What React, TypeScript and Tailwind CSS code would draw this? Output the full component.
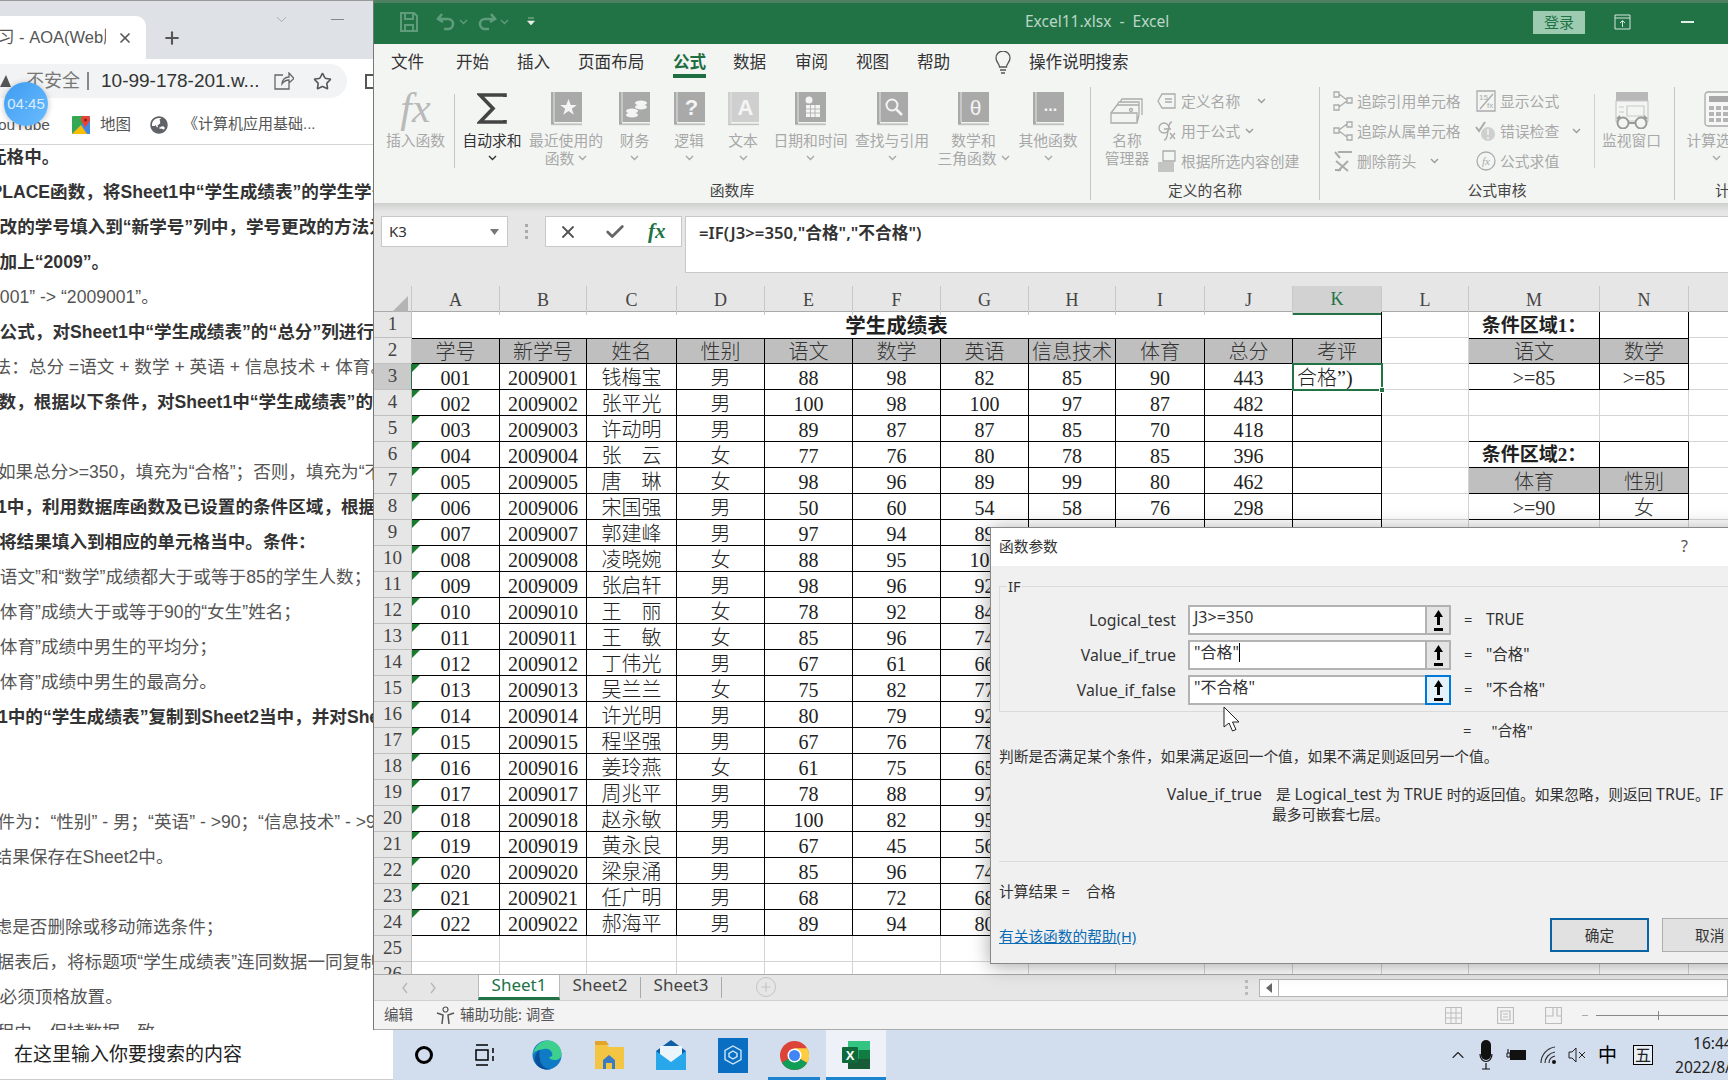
import React from "react";
import { Plus, Star, X, Check, ChevronUp, ChevronDown } from "lucide-react";
import { FaGlobeAsia } from "react-icons/fa";

const lines: { t: string; b?: boolean; m: string }[] = [
  { t: "元格中。", b: true, m: "ml-[-11px]" },
  { t: "REPLACE函数，将Sheet1中“学生成绩表”的学生学号", b: true, m: "ml-[-34px]" },
  { t: "更改的学号填入到“新学号”列中，学号更改的方法为", b: true, m: "ml-[-18px]" },
  { t: "前加上“2009”。", b: true, m: "ml-[-18px]" },
  { t: "“001” -> “2009001”。", m: "ml-[-6px]" },
  { t: "用公式，对Sheet1中“学生成绩表”的“总分”列进行", b: true, m: "ml-[-18px]" },
  { t: "方法：总分 =语文 + 数学 + 英语 + 信息技术 + 体育。", m: "ml-[-24px]" },
  { t: "函数，根据以下条件，对Sheet1中“学生成绩表”的“", b: true, m: "ml-[-19px]" },
  { t: "", m: "" },
  { t: "如果总分>=350，填充为“合格”；否则，填充为“不合格”。", m: "ml-[-2px]" },
  { t: "Sheet1中，利用数据库函数及已设置的条件区域，根据", b: true, m: "ml-[-51px]" },
  { t: "将结果填入到相应的单元格当中。条件：", b: true, m: "ml-[-1px]" },
  { t: "“语文”和“数学”成绩都大于或等于85的学生人数；", m: "ml-[-6px]" },
  { t: "“体育”成绩大于或等于90的“女生”姓名；", m: "ml-[-6px]" },
  { t: "“体育”成绩中男生的平均分；", m: "ml-[-6px]" },
  { t: "“体育”成绩中男生的最高分。", m: "ml-[-6px]" },
  { t: "Sheet1中的“学生成绩表”复制到Sheet2当中，并对Sheet", b: true, m: "ml-[-50px]" },
  { t: "", m: "" },
  { t: "", m: "" },
  { t: "条件为：“性别” - 男；“英语” - >90；“信息技术” - >90", m: "ml-[-20px]" },
  { t: "将结果保存在Sheet2中。", m: "ml-[-23px]" },
  { t: "", m: "" },
  { t: "考虑是否删除或移动筛选条件；", m: "ml-[-23px]" },
  { t: "数据表后，将标题项“学生成绩表”连同数据一同复制", m: "ml-[-21px]" },
  { t: "时必须顶格放置。", m: "ml-[-18px]" },
  { t: "过程中，保持数据一致。", m: "ml-[-21px]" },
];

const names = ["钱梅宝","张平光","许动明","张　云","唐　琳","宋国强","郭建峰","凌晓婉","张启轩","王　丽","王　敏","丁伟光","吴兰兰","许光明","程坚强","姜玲燕","周兆平","赵永敏","黄永良","梁泉涌","任广明","郝海平"];
const sex = "男男男女女男男女男女女男女男男女男男男男男男";
const E = [88,100,89,77,98,50,97,88,98,78,85,67,75,80,67,61,78,100,67,85,68,89];
const F = [98,98,87,76,96,60,94,95,96,92,96,61,82,79,76,75,88,82,45,96,72,94];
const G = [82,100,87,80,89,54,89,100,92,84,74,66,77,92,78,65,97,95,56,74,68,80];
const H = [85,97,85,78,99,58,75];
const I = [90,87,70,85,80,76,73];
const J = [443,482,418,396,462,298,428];
const headers = ["学号","新学号","姓名","性别","语文","数学","英语","信息技术","体育","总分","考评"];
const cols = "ABCDEFGHIJKLMN".split("");

const GRID = "grid grid-cols-[38px_88px_87px_90px_88px_88px_88px_88px_87px_89px_88px_89px_87px_131px_89px_40px]";
const gridCell = "border-r border-b border-[#d4d4d4]";
const blackCell = "border-r border-b border-black";

function Chev({ className = "text-[#9a9a9a]" }: { className?: string }) {
  return (
    <svg width="9" height="6" viewBox="0 0 9 6" className={className}>
      <path d="M1 1l3.5 3.5L8 1" fill="none" stroke="currentColor" strokeWidth="1.4" />
    </svg>
  );
}

function Book({ children, tone = "#a9a9a9" }: { children?: React.ReactNode; tone?: string }) {
  return (
    <svg width="31" height="34" viewBox="0 0 31 34">
      <rect x="0" y="0" width="31" height="32" fill={tone} />
      <rect x="2.5" y="0" width="1" height="30" fill="#e6e6e6" />
      <rect x="3" y="30" width="28" height="1.6" fill="#f2f2f2" />
      <rect x="0" y="32" width="31" height="1.2" fill="#c2c2c2" />
      {children}
    </svg>
  );
}

const bookText = (s: string) => (
  <text x="17.5" y="23" textAnchor="middle" fontSize="22" fontWeight="700" fontFamily="Liberation Sans" fill="#f4f4f4">{s}</text>
);

function RibbonBtn({ w, icon, l1, l2, chev, dark }: { w: string; icon: React.ReactNode; l1: string; l2?: string; chev?: boolean; dark?: boolean }) {
  return (
    <div className={`${w} flex flex-col items-center shrink-0 pt-[8px] ${dark ? "text-[#333]" : "text-[#a8a8a8]"}`}>
      <div className="h-[33px] flex items-center justify-center">{icon}</div>
      <div className="mt-[6px] h-[18px] leading-[18px] whitespace-nowrap">{l1}</div>
      <div className="h-[18px] leading-[18px] whitespace-nowrap flex items-center gap-[4px]">
        {l2}
        {chev && <Chev className={dark ? "text-[#333]" : "text-[#a8a8a8]"} />}
      </div>
    </div>
  );
}

function Row3({ icon, label, chev, gap }: { icon: React.ReactNode; label: string; chev?: boolean; gap: string }) {
  return (
    <div className="h-[30px] flex items-center text-[#a8a8a8] whitespace-nowrap">
      <div className="w-[24px] h-[24px] flex items-center justify-center shrink-0">{icon}</div>
      <span className="ml-[2px]">{label}</span>
      {chev && <span className={gap}><Chev /></span>}
    </div>
  );
}

const gs = { fill: "none", stroke: "#ababab", strokeWidth: 1.3 };

function TitleIcons() {
  const c = "#5f9c7c";
  return (
    <div className="flex items-center ml-[26px] gap-[0px]">
      <svg width="18" height="20" viewBox="0 0 18 20"><path d="M1 1h13l3 3v15H1z M5 1v6h8V1 M5 19v-6h8v6" fill="none" stroke={c} strokeWidth="2" /></svg>
      <svg className="ml-[18px]" width="20" height="20" viewBox="0 0 20 20"><path d="M6 2L2 7l5 3 M2.5 7H12a5 5 0 0 1 0 10H8" fill="none" stroke={c} strokeWidth="2.6" /></svg>
      <span className="ml-[3px]"><Chev className="text-[#5f9c7c]" /></span>
      <svg className="ml-[9px]" width="20" height="20" viewBox="0 0 20 20"><path d="M14 2l4 5-5 3 M17.5 7H8a5 5 0 0 0 0 10h4" fill="none" stroke={c} strokeWidth="2.6" /></svg>
      <span className="ml-[3px]"><Chev className="text-[#5f9c7c]" /></span>
      <svg className="ml-[18px]" width="8" height="10" viewBox="0 0 8 10"><path d="M1 1h6M0.5 4h7L4 8z" fill="#e8efe9" stroke="#e8efe9" strokeWidth="0.6" /></svg>
    </div>
  );
}

function TitleBar() {
  return (
    <div className="h-[44px] shrink-0 bg-[#217346] border-t-[3px] border-[#4c8060] flex items-center relative text-[15.5px] pb-[3px]">
      <TitleIcons />
      <div className="ml-[490px] w-[300px] text-[#bcd6c6] whitespace-pre">Excel11.xlsx  -  Excel</div>
      <div className="ml-[208px] w-[52px] h-[23px] bg-[#9ccbb1] text-[#217346] text-[15px] flex items-center justify-center">登录</div>
      <svg className="ml-[29px]" width="17" height="16" viewBox="0 0 17 16"><path d="M1 1h15v14H1z M1 4h15 M8.5 13V7 M6 9l2.5-2.5L11 9" fill="none" stroke="#d6e6dc" strokeWidth="1" /></svg>
      <div className="ml-[50px] w-[13px] h-[1.5px] bg-[#e4eee8]" />
    </div>
  );
}

function Tabs() {
  const items = [
    ["文件", "w-[82px] pl-[17px]"],
    ["开始", "w-[61px]"],
    ["插入", "w-[61px]"],
    ["页面布局", "w-[95px]"],
    ["公式", "w-[60px]"],
    ["数据", "w-[62px]"],
    ["审阅", "w-[61px]"],
    ["视图", "w-[61px]"],
    ["帮助", "w-[60px]"],
  ];
  return (
    <div className="h-[40px] flex text-[16.6px] text-[#333] pt-[6px]">
      {items.map(([t, w]) => (
        <div key={t} className={`${w} shrink-0`}>
          <div className={`h-[28px] leading-[24px] inline-block whitespace-nowrap ${t === "公式" ? "font-bold text-[#1f6e43] border-b-[4px] border-[#1f6e43]" : ""}`}>{t}</div>
        </div>
      ))}
      <svg className="mt-[1px] ml-[18px]" width="16" height="25" viewBox="0 0 16 25"><path d="M4.5 16c0-3-3.500-5-3.500-9a7 7 0 0 1 14 0c0 4-3.500 6-3.500 9z M5 19h6M6 22h4" fill="none" stroke="#555" strokeWidth="1.3" /></svg>
      <span className="ml-[18px] leading-[24px] whitespace-nowrap">操作说明搜索</span>
    </div>
  );
}

function Ribbon() {
  return (
    <div className="h-[159px] shrink-0 bg-[#f3f5f3] flex flex-col text-[14.8px]">
      <Tabs />
      <div className="flex flex-1 min-h-0">
        <div className="w-[717px] shrink-0 flex flex-col border-r border-[#c6c6c6] my-[3px] mt-[3px]">
          <div className="flex-1 flex -mt-[3px]">
            <div className="w-[3px] shrink-0" />
            <RibbonBtn w="w-[77px]" l1="插入函数" icon={<span className="[font-family:'Liberation_Serif',serif] italic text-[42px] leading-[33px] text-[#b9b9b9]">fx</span>} />
            <div className="w-[1px] h-[74px] mt-[10px] bg-[#c6c6c6] shrink-0" />
            <RibbonBtn w="w-[74px]" dark chev l1="自动求和" icon={<svg width="30" height="33" viewBox="0 0 30 33"><path d="M28 5V3H3l13 13.500L3 30h25v-2" fill="none" stroke="#444" strokeWidth="3.600" /></svg>} />
            <RibbonBtn w="w-[74px]" chev l1="最近使用的" l2="函数" icon={<Book><path d="M17.500 7l2.300 6h6l-5 3.800 2 6-5.300-3.800-5.300 3.800 2-6-5-3.800h6z" fill="#f4f4f4" /></Book>} />
            <RibbonBtn w="w-[63px]" chev l1="财务" icon={<Book><ellipse cx="22" cy="11" rx="6" ry="2.500" fill="#f4f4f4" /><ellipse cx="22" cy="15" rx="6" ry="2.500" fill="#f4f4f4" /><ellipse cx="13" cy="19" rx="6" ry="2.500" fill="#f4f4f4" /><ellipse cx="13" cy="23" rx="6" ry="2.500" fill="#f4f4f4" /></Book>} />
            <RibbonBtn w="w-[46px]" chev l1="逻辑" icon={<Book>{bookText("?")}</Book>} />
            <RibbonBtn w="w-[62px]" chev l1="文本" icon={<Book tone="#cfcfcf">{bookText("A")}</Book>} />
            <RibbonBtn w="w-[73px]" chev l1="日期和时间" icon={<Book><circle cx="14" cy="8" r="3.500" fill="#f4f4f4" /><rect x="11" y="13" width="14" height="12" fill="#f4f4f4" /><path d="M11 17h14M11 21h14M15.500 13v12M20 13v12" stroke="#a9a9a9" strokeWidth="0.8" /></Book>} />
            <RibbonBtn w="w-[90px]" chev l1="查找与引用" icon={<Book><circle cx="15" cy="13" r="5.500" fill="none" stroke="#f4f4f4" strokeWidth="2" /><path d="M19 17l6 6" stroke="#f4f4f4" strokeWidth="2.500" /></Book>} />
            <RibbonBtn w="w-[73px]" chev l1="数学和" l2="三角函数" icon={<Book><text x="17.500" y="23" textAnchor="middle" fontSize="21" fontFamily="Liberation Sans" fill="#f4f4f4">θ</text></Book>} />
            <RibbonBtn w="w-[76px]" chev l1="其他函数" icon={<Book><text x="17.500" y="19" textAnchor="middle" fontSize="16" fontWeight="700" fontFamily="Liberation Sans" fill="#f4f4f4">...</text></Book>} />
          </div>
          <div className="h-[21px] text-center text-[#444] leading-[22px]">函数库</div>
        </div>
        <div className="w-[229px] shrink-0 flex flex-col border-r border-[#c6c6c6] my-[3px]">
          <div className="flex-1 flex -mt-[3px]">
            <div className="w-[8px] shrink-0" />
            <RibbonBtn w="w-[56px]" l1="名称" l2="管理器" icon={<svg width="36" height="30" viewBox="0 0 36 30" className="mt-[6px]"><path d="M2 16h26v10H2z M2 16l6-8h22v10l-2 8 M8 8l2-3h20v4 M11 5l2-3h20v16" {...gs} /><circle cx="22" cy="13" r="1.500" {...gs} /></svg>} />
            <div className="flex flex-col pt-[2px]">
              <Row3 gap="ml-[17px]" chev label="定义名称" icon={<svg width="20" height="18" viewBox="0 0 20 18"><path d="M5 2h13v14H5L1 9z M8 7h7M8 10h7" {...gs} /></svg>} />
              <Row3 gap="ml-[5px]" chev label="用于公式" icon={<svg width="20" height="24" viewBox="0 0 20 24"><circle cx="7" cy="9" r="5" {...gs} /><path d="M15 3c-3 0-3 4-4 9s-1 9-4 9 M7 10h7 M13 14l5 6M18 14l-5 6" {...gs} /></svg>} />
              <Row3 gap="" label="根据所选内容创建" icon={<svg width="20" height="24" viewBox="0 0 20 24"><path d="M6 2h12v10H6z" {...gs} /><rect x="1" y="13" width="16" height="10" fill="#c4c4c4" /></svg>} />
            </div>
          </div>
          <div className="h-[21px] text-center text-[#444] leading-[22px]">定义的名称</div>
        </div>
        <div className="w-[355px] shrink-0 flex flex-col border-r border-[#c6c6c6] my-[3px]">
          <div className="flex-1 flex -mt-[3px]">
            <div className="w-[11px] shrink-0" />
            <div className="w-[143px] shrink-0 flex flex-col pt-[2px]">
              <Row3 gap="" label="追踪引用单元格" icon={<svg width="20" height="22" viewBox="0 0 20 22"><path d="M1 2h5v5H1z M1 15h5v5H1z M14 8h5v5h-5z M6 4l8 6M6 17l8-6" {...gs} /></svg>} />
              <Row3 gap="" label="追踪从属单元格" icon={<svg width="20" height="22" viewBox="0 0 20 22"><path d="M1 8h5v5H1z M14 2h5v5h-5z M14 15h5v5h-5z M6 10l8-6M6 11l8 6" {...gs} /></svg>} />
              <Row3 gap="ml-[14px]" chev label="删除箭头" icon={<svg width="20" height="24" viewBox="0 0 20 24"><path d="M2 3l5 6M5 3h14M2 21h6M3 12l12 10M15 12L5 22" {...gs} strokeWidth="2" /></svg>} />
            </div>
            <div className="flex flex-col pt-[2px] w-[120px] shrink-0">
              <Row3 gap="" label="显示公式" icon={<svg width="20" height="22" viewBox="0 0 20 22"><path d="M1 1h18v20H1z M17 4L4 19" {...gs} /><text x="3" y="10" fontSize="8" fill="#ababab" fontFamily="Liberation Sans">15</text><text x="11" y="18" fontSize="8" fill="#ababab" fontFamily="Liberation Sans">fx</text></svg>} />
              <Row3 gap="ml-[13px]" chev label="错误检查" icon={<svg width="22" height="22" viewBox="0 0 22 22"><path d="M1 7l3 4 6-9" {...gs} strokeWidth="2" /><circle cx="13" cy="14" r="7" fill="#cfcfcf" /><path d="M13 9v6M13 17v2" stroke="#f3f5f3" strokeWidth="1.500" /></svg>} />
              <Row3 gap="" label="公式求值" icon={<svg width="20" height="22" viewBox="0 0 20 22"><circle cx="10" cy="11" r="9" {...gs} /><text x="6" y="15" fontSize="11" fontStyle="italic" fontFamily="Liberation Serif" fill="#ababab">fx</text></svg>} />
            </div>
            <div className="w-[1px] h-[74px] mt-[10px] bg-[#d0d0d0] shrink-0" />
            <RibbonBtn w="w-[73px]" l1="监视窗口" icon={<svg width="36" height="37" viewBox="0 0 36 37" className="mt-[3px]"><path d="M2 0h32v9H2z" fill="#b8b8b8" /><path d="M2 9h32v20H2z M13 14h17v10H13z M5 15h5M5 20h5" fill="none" stroke="#c8c8c8" strokeWidth="1.200" /><circle cx="9" cy="31" r="5.500" fill="#f3f5f3" stroke="#999" strokeWidth="2" /><circle cx="27" cy="31" r="5.500" fill="#f3f5f3" stroke="#999" strokeWidth="2" /><path d="M14 31h8M3 27l3-3M33 27l-3-3" stroke="#999" strokeWidth="2" /></svg>} />
          </div>
          <div className="h-[21px] text-center text-[#444] leading-[22px]">公式审核</div>
        </div>
        <div className="flex flex-col flex-1 min-w-0 ml-[11px]">
          <div className="flex-1">
            <RibbonBtn w="w-[60px]" chev l1="计算选项" icon={<svg width="34" height="36" viewBox="0 0 34 36" className="ml-[10px]"><rect x="1" y="1" width="32" height="34" rx="3" fill="#f6f6f6" stroke="#a8a8a8" strokeWidth="1.300" /><rect x="5" y="5" width="24" height="6" fill="#a8a8a8" /><path d="M5 15h5v4H5zM12 15h5v4h-5zM19 15h5v4h-5zM5 21h5v4H5zM12 21h5v4h-5zM19 21h5v4h-5zM5 27h5v4H5zM12 27h5v4h-5zM19 27h5v4h-5z" fill="#b4b4b4" /></svg>} />
          </div>
          <div className="h-[24px] text-[#444] leading-[22px] pl-[29px] whitespace-nowrap">计算选项</div>
        </div>
      </div>
    </div>
  );
}

function FormulaBar() {
  return (
    <div className="h-[83px] shrink-0 bg-[#e6e6e6] relative">
      <div className="h-[9px] bg-gradient-to-b from-[#cfcfcf] to-[#e6e6e6]" />
      <div className="flex items-start mt-[4px] pl-[7px]">
        <div className="w-[127px] h-[31px] bg-white border border-[#c8c8c8] flex items-center justify-between px-[6px] text-[15px] text-[#333]">
          <span className="pl-[1px]">K3</span>
          <svg width="9" height="6" viewBox="0 0 9 6" className="mr-[2px]"><path d="M0 0h9L4.500 6z" fill="#777" /></svg>
        </div>
        <div className="w-[37px] h-[31px] flex flex-col items-center justify-center gap-[3px]">
          <span className="w-[3px] h-[3px] bg-[#aaa]" /><span className="w-[3px] h-[3px] bg-[#aaa]" /><span className="w-[3px] h-[3px] bg-[#aaa]" />
        </div>
        <div className="w-[137px] h-[31px] bg-white border border-[#c8c8c8] flex items-center text-[#555]">
          <X className="ml-[12px]" size={20} strokeWidth={2.200} />
          <Check className="ml-[26px] text-[#666]" size={22} strokeWidth={3} />
          <span className="ml-[22px] [font-family:'Liberation_Serif',serif] italic font-bold text-[21px] text-[#217346]">fx</span>
        </div>
        <div className="ml-[3px] flex-1 h-[57px] bg-white border-y border-l border-[#c8c8c8] pl-[13px] pt-[3px] text-[16.700px] font-semibold text-[#333] whitespace-nowrap">=IF(J3&gt;=350,"合格","不合格")</div>
      </div>
    </div>
  );
}

function Tick() {
  return <span className="absolute top-0 left-0 w-0 h-0 border-t-[8px] border-t-[#1a7a2e] border-r-[8px] border-r-transparent" />;
}

function Sheet() {
  const rows: React.ReactNode[] = [];
  const grey = "bg-[#bfbfbf]";
  const rowHead = (n: number) => (
    <div key={`h${n}`} className={`flex items-center justify-center text-[19px] text-[#444] border-r border-b ${n === 3 ? "bg-[#cacaca] border-r-[#217346] border-b-[#c0c0c0]" : "bg-[#e6e6e6] border-[#c0c0c0]"}`}>{n}</div>
  );
  const center = "flex items-center justify-center whitespace-nowrap overflow-hidden pt-[2px]";
  rows.push(rowHead(1));
  rows.push(<div key="title" className={`col-span-11 ${center} font-bold text-[20.500px] text-[#222] ${blackCell} border-b-0`}>学生成绩表</div>);
  rows.push(<div key="L1" className={gridCell} />);
  rows.push(<div key="M1" className={`${center} font-bold text-[19px] text-[#222] ${blackCell} border-b-0`}>条件区域1：</div>);
  rows.push(<div key="N1" className={`${blackCell} border-b-0`} />);
  rows.push(<div key="O1" className={gridCell} />);
  rows.push(rowHead(2));
  headers.forEach((h) => rows.push(<div key={`t${h}`} className={`${center} ${grey} text-[#333] ${blackCell} border-t border-t-black`}>{h}</div>));
  rows.push(<div key="L2" className={gridCell} />);
  rows.push(<div key="M2" className={`${center} ${grey} text-[#333] ${blackCell} border-t border-t-black`}>语文</div>);
  rows.push(<div key="N2" className={`${center} ${grey} text-[#333] ${blackCell} border-t border-t-black`}>数学</div>);
  rows.push(<div key="O2" className={gridCell} />);
  for (let i = 0; i < 22; i++) {
    const n = i + 3;
    rows.push(rowHead(n));
    const vals = [
      String(i + 1).padStart(3, "0"),
      String(2009001 + i),
      names[i],
      sex[i],
      E[i], F[i], G[i],
      H[i] ?? "", I[i] ?? "", J[i] ?? "",
    ];
    vals.forEach((v, c) =>
      rows.push(
        <div key={`${n}-${c}`} className={`${center} relative text-[#222] ${blackCell}`}>
          {c === 0 && <Tick />}
          {v}
        </div>
      )
    );
    if (n === 3) {
      rows.push(
        <div key="K3" className="relative flex items-center pl-[4px] pt-[2px] text-[#222] border-r border-b border-black outline-2 outline-[#217346] -outline-offset-1 z-10 whitespace-nowrap">
          合格”)
          <span className="absolute right-[-4px] bottom-[-4px] w-[6px] h-[6px] bg-[#217346] border border-white" />
        </div>
      );
    } else {
      rows.push(<div key={`K${n}`} className={blackCell} />);
    }
    rows.push(<div key={`L${n}`} className={gridCell} />);
    const m: Record<number, [string, string, string]> = {
      3: [">=85", ">=85", ""],
      6: ["条件区域2：", "", "bold"],
      7: ["体育", "性别", "grey"],
      8: [">=90", "女", ""],
    };
    const row = m[n];
    if (row) {
      const cls = row[2] === "grey" ? grey + " text-[#333]" : row[2] === "bold" ? "font-bold text-[19px] text-[#222]" : "text-[#333]";
      rows.push(<div key={`M${n}`} className={`${center} ${cls} ${blackCell}`}>{row[0]}</div>);
      rows.push(<div key={`N${n}`} className={`${center} ${row[2] === "grey" ? grey + " text-[#333]" : "text-[#333]"} ${blackCell}`}>{row[1]}</div>);
    } else if (n === 5) {
      rows.push(<div key="M5" className="border-r border-b border-r-[#d4d4d4] border-b-black" />);
      rows.push(<div key="N5" className="border-r border-b border-r-[#d4d4d4] border-b-black" />);
    } else {
      rows.push(<div key={`M${n}`} className={gridCell} />);
      rows.push(<div key={`N${n}`} className={gridCell} />);
    }
    rows.push(<div key={`O${n}`} className={gridCell} />);
  }
  for (const n of [25, 26]) {
    rows.push(rowHead(n));
    for (let c = 0; c < 15; c++) rows.push(<div key={`${n}x${c}`} className={gridCell} />);
  }
  return (
    <div className="flex-1 min-h-0 overflow-hidden bg-white [font-family:'Liberation_Serif','Noto_Sans_CJK_SC',serif] text-[20px] font-light">
      <div className={`${GRID} h-[26px] bg-[#e6e6e6] border-b border-[#aaa]`}>
        <div className="border-r border-[#c8c8c8] flex items-end justify-end pr-[3px] pb-[2px]">
          <svg width="17" height="17" viewBox="0 0 17 17"><path d="M17 0v17H0z" fill="#b4b4b4" /></svg>
        </div>
        {cols.map((c) => (
          <div key={c} className={`flex items-center justify-center text-[18px] border-r border-[#c8c8c8] ${c === "K" ? "bg-[#d2d2d2] text-[#217346] border-b-2 border-b-[#217346]" : "text-[#444]"}`}>{c}</div>
        ))}
        <div />
      </div>
      <div className={`${GRID} auto-rows-[26px]`}>{rows}</div>
    </div>
  );
}

function SheetTabs() {
  return (
    <div className="h-[26px] shrink-0 bg-[#e6e6e6] border-t border-[#aaa] flex items-stretch text-[17px] text-[#444] [font-family:'Noto_Sans',sans-serif]">
      <div className="w-[104px] flex items-center text-[#b5b5b5] shrink-0">
        <svg className="ml-[28px]" width="6" height="12" viewBox="0 0 6 12"><path d="M5 1L1 6l4 5" fill="none" stroke="currentColor" strokeWidth="1.300" /></svg>
        <svg className="ml-[22px]" width="6" height="12" viewBox="0 0 6 12"><path d="M1 1l4 5-4 5" fill="none" stroke="currentColor" strokeWidth="1.300" /></svg>
      </div>
      <div className="w-[82px] bg-white border-x border-[#bbb] border-b-[3px] border-b-[#217346] text-[#217346] flex items-center justify-center pb-[3px] leading-[20px]">Sheet1</div>
      <div className="w-[81px] flex items-center justify-center border-r border-[#aaa] my-[2px] pb-[6px] leading-[20px]">Sheet2</div>
      <div className="w-[81px] flex items-center justify-center border-r border-[#aaa] my-[2px] pb-[6px] leading-[20px]">Sheet3</div>
      <div className="w-[34px] shrink-0" />
      <div className="w-[20px] h-[20px] mt-[2px] rounded-full border border-[#c4c4c4] text-[#c4c4c4] flex items-center justify-center"><Plus size={14} /></div>
      <div className="w-[458px] shrink-0" />
      <div className="flex flex-col justify-center gap-[3px] w-[25px] shrink-0 items-center">
        <span className="w-[3px] h-[3px] bg-[#bbb]" /><span className="w-[3px] h-[3px] bg-[#bbb]" /><span className="w-[3px] h-[3px] bg-[#bbb]" />
      </div>
      <div className="flex-1 h-[18px] mt-[4px] bg-white border border-[#b5b5b5] flex">
        <div className="w-[19px] border-r border-[#b5b5b5] flex items-center justify-center">
          <svg width="6" height="10" viewBox="0 0 6 10"><path d="M6 0v10L0 5z" fill="#666" /></svg>
        </div>
      </div>
    </div>
  );
}

function StatusBar() {
  return (
    <div className="h-[30px] shrink-0 bg-[#f3f3f3] border-t border-[#d0d0d0] border-b border-b-[#aaa] flex items-center text-[14.500px] text-[#555] whitespace-nowrap">
      <span className="ml-[10px]">编辑</span>
      <svg className="ml-[23px]" width="19" height="19" viewBox="0 0 19 19"><circle cx="9.500" cy="3.500" r="2.500" fill="none" stroke="#555" strokeWidth="1.200" /><path d="M1 7l6 2-1 9M18 7l-6 2 1 9" fill="none" stroke="#555" strokeWidth="1.500" /></svg>
      <span className="ml-[5px] w-[100px]">辅助功能: 调查</span>
      <svg className="ml-[885px]" width="17" height="17" viewBox="0 0 17 17"><path d="M.5.5h16v16H.5z M.5 6h16M.5 11h16M6 .5v16M11 .5v16" fill="none" stroke="#bdbdbd" strokeWidth="1" /></svg>
      <svg className="ml-[35px]" width="17" height="17" viewBox="0 0 17 17"><path d="M.5.5h16v16H.5z M4 4h9v9H4z M6 7h5M6 10h5" fill="none" stroke="#bdbdbd" strokeWidth="1.200" /></svg>
      <svg className="ml-[31px]" width="17" height="17" viewBox="0 0 17 17"><path d="M.5.5h16v16H.5z M.5 9H8V.5 M12 .5V9h4.500" fill="none" stroke="#bdbdbd" strokeWidth="1.200" /></svg>
      <div className="ml-[20px] w-[6px] h-[1px] bg-[#aaa]" />
      <div className="ml-[8px] flex-1 h-[1px] bg-[#888] relative">
        <span className="absolute left-[62px] top-[-4px] w-[1px] h-[9px] bg-[#888]" />
      </div>
    </div>
  );
}

function ArgRow({ label, value, val, active, caret }: { label: string; value: string; val: string; active?: boolean; caret?: boolean }) {
  return (
    <div className="flex items-start h-[35px]">
      <div className="w-[176px] shrink-0 text-right pt-[4px] leading-[22px] text-[#333] text-[15.800px]">{label}</div>
      <div className="ml-[12px] w-[263px] h-[30px] border-2 border-r-0 border-[#b2b2b2] border-r-transparent bg-white flex shrink-0">
        <div className="flex-1 pl-[4px] text-[#333] leading-[20px] text-[16px] flex items-start whitespace-nowrap">
          {value}
          {caret && <span className="w-[1px] h-[19px] bg-black mt-[1px]" />}
        </div>
        <div className={`w-[26px] -my-[2px] h-[30px] flex items-center justify-center border-2 ${active ? "border-[#0078d7] bg-[#e5f1fb]" : "border-[#b2b2b2] bg-[#e4e4e4]"}`}>
          <svg width="11" height="21" viewBox="0 0 11 21"><path d="M5.500 0L10 7H7v8H4V7H1z M1 18h9v3H1z" fill="#000" /></svg>
        </div>
      </div>
      <span className="ml-[13px] w-[21px] shrink-0 leading-[28px] text-[#333]">=</span>
      <span className="ml-[1px] leading-[28px] text-[#333] whitespace-nowrap text-[15.500px]">{val}</span>
    </div>
  );
}

function Dialog() {
  return (
    <div className="absolute left-[990px] top-[527px] w-[780px] h-[437px] bg-[#f0f0f0] border border-[#888] shadow-[0_2px_18px_rgba(0,0,0,0.35)] text-[14.700px] text-[#333] [font-family:'Noto_Sans','Noto_Sans_CJK_SC',sans-serif] z-20 flex flex-col">
      <div className="h-[38px] shrink-0 bg-white flex items-center pl-[8px] pb-[2px]">
        <span className="w-[682px]">函数参数</span>
        <span className="text-[16px] text-[#555]">?</span>
      </div>
      <div className="mx-[8px] mt-[20px] h-[126px] shrink-0 border-t border-l border-b border-[#dadada] relative w-[790px]">
        <span className="absolute left-[7px] top-[-11px] bg-[#f0f0f0] px-[1px] leading-[20px]">IF</span>
        <div className="pt-[18px]">
          <ArgRow label="Logical_test" value="J3>=350" val="TRUE" />
          <ArgRow label="Value_if_true" value={'"合格"'} val={'"合格"'} caret />
          <ArgRow label="Value_if_false" value={'"不合格"'} val={'"不合格"'} active />
        </div>
        <svg className="absolute left-[223px] top-[119px] z-10" width="18" height="26" viewBox="0 0 18 26"><path d="M1 1v20l5-4 3.500 8 3.500-1.500L9.500 16H16z" fill="#fff" stroke="#222" strokeWidth="1" /></svg>
      </div>
      <div className="h-[32px] shrink-0 flex items-center pl-[472px] gap-[20px] pt-[4px]"><span>=</span><span>"合格"</span></div>
      <div className="pl-[8px] leading-[24px] h-[24px] shrink-0 whitespace-nowrap">判断是否满足某个条件，如果满足返回一个值，如果不满足则返回另一个值。</div>
      <div className="mt-[16px] flex whitespace-nowrap leading-[20px] h-[46px] shrink-0">
        <div className="w-[271px] shrink-0 text-right text-[15.800px]">Value_if_true</div>
        <div className="ml-[14px]">
          <div>是 <span className="text-[15.800px]">Logical_test</span> 为 <span className="text-[15.800px]">TRUE</span> 时的返回值。如果忽略，则返回 <span className="text-[15.800px]">TRUE</span>。<span className="text-[15.800px]">IF</span> 函数</div>
          <div className="-ml-[4px]">最多可嵌套七层。</div>
        </div>
      </div>
      <div className="mt-[31px] mx-[8px] h-[1px] bg-[#dadada] w-[790px] shrink-0" />
      <div className="mt-[18px] pl-[8px] leading-[22px] flex whitespace-nowrap shrink-0">
        <span className="w-[87px]">计算结果 =</span><span>合格</span>
      </div>
      <div className="mt-[16px] pl-[8px] flex items-start shrink-0">
        <span className="w-[551px] text-[#0a6cb5] underline pt-[7px] whitespace-nowrap">有关该函数的帮助(H)</span>
        <button className="w-[99px] h-[34px] bg-[#e1e1e1] border-2 border-[#0a64a4] text-[#333]">确定</button>
        <button className="ml-[13px] w-[99px] h-[34px] bg-[#e1e1e1] border border-[#adadad] text-[#333] text-left pl-[32px]">取消</button>
      </div>
    </div>
  );
}

function Excel() {
  return (
    <div className="flex-1 min-w-0 flex flex-col border-l border-[#777] [font-family:'Noto_Sans','Noto_Sans_CJK_SC',sans-serif]">
      <TitleBar />
      <Ribbon />
      <FormulaBar />
      <Sheet />
      <SheetTabs />
      <StatusBar />
    </div>
  );
}

function Browser() {
  return (
    <div className="w-[373px] shrink-0 flex flex-col bg-white overflow-hidden [font-family:'Liberation_Sans','Noto_Sans_CJK_SC',sans-serif]">
      <div className="h-[59px] shrink-0 bg-[#dee1e6] border-t border-[#999] flex">
        <div className="w-[146px] h-[43px] mt-[15px] bg-white rounded-tr-[10px] flex items-center overflow-hidden shrink-0">
          <span className="w-[108px] ml-[-2px] overflow-hidden whitespace-nowrap text-[16.500px] text-[#555] shrink-0">习 - AOA(Web版</span>
          <X className="ml-[11px] text-[#555] shrink-0" size={16} strokeWidth={2.500} />
        </div>
        <Plus className="ml-[16px] mt-[27px] text-[#555] shrink-0" size={20} strokeWidth={2.500} />
        <ChevronDown className="ml-[91px] mt-[10px] text-[#999] shrink-0" size={17} strokeWidth={1} />
        <div className="ml-[41px] mt-[18px] w-[13px] h-[1px] bg-[#888] shrink-0" />
      </div>
      <div className="h-[46px] shrink-0 pt-[5px] flex">
        <div className="w-[347px] h-[34px] rounded-r-full bg-[#f1f3f4] flex items-center shrink-0 whitespace-nowrap">
          <svg width="11" height="12" viewBox="0 0 11 12" className="shrink-0"><path d="M6 0l5 12H0z" fill="#555" /></svg>
          <span className="ml-[15px] text-[#777] text-[18px] shrink-0">不安全</span>
          <span className="ml-[7px] w-[2px] h-[18px] bg-[#888] shrink-0" />
          <span className="ml-[12px] text-[#333] shrink-0 text-[19px]">10-99-178-201.w...</span>
          <svg className="ml-[15px] shrink-0" width="20" height="18" viewBox="0 0 20 18"><path d="M9 3H1v14h14v-6 M8 12c0-4 3-7 7-7V1l5 5.500L15 11V8c-3 0-5 1-7 4z" fill="none" stroke="#666" strokeWidth="1.300" /></svg>
          <Star className="ml-[19px] text-[#555] shrink-0" size={19} strokeWidth={2} />
        </div>
        <div className="ml-[18px] mt-[10px] w-[11px] h-[15px] border-2 border-r-0 border-[#555]" />
      </div>
      <div className="h-[40px] shrink-0 border-b border-[#d4d4d4] flex items-center text-[15.500px] text-[#555] whitespace-nowrap">
        <span className="ml-[-11px] w-[69px] shrink-0">YouTube</span>
        <svg className="ml-[14px] shrink-0" width="18" height="18" viewBox="0 0 18 18">
          <rect width="18" height="18" rx="1" fill="#34a853" /><path d="M0 18L18 0v18z" fill="#4285f4" opacity="0.9" /><path d="M0 18l9-9 6 9z" fill="#fbbc04" /><path d="M8 3a4.500 4.500 0 0 1 9 0c0 4-4.500 6-4.500 10C12.500 9 8 7 8 3z" fill="#ea4335" transform="translate(1 0)" /><circle cx="13.500" cy="4" r="1.500" fill="#8b1d15" />
        </svg>
        <span className="ml-[10px] text-[#555] w-[37px] shrink-0">地图</span>
        <FaGlobeAsia className="ml-[13px] text-[#5f6368] shrink-0" size={18} />
        <span className="ml-[15px] shrink-0 text-[15px]">《计算机应用基础...</span>
      </div>
      <div className="flex-1 min-h-0 overflow-hidden">
        <div className="-mt-[5px]">
          {lines.map((l, i) => (
            <div key={i} className={`h-[35px] leading-[35px] text-[17.600px] whitespace-nowrap ${l.m} ${l.b ? "font-bold text-[#333]" : "text-[#555]"}`}>{l.t || "\u00a0"}</div>
          ))}
        </div>
      </div>
    </div>
  );
}

function Taskbar() {
  return (
    <div className="h-[50px] shrink-0 bg-[#d2dded] flex items-stretch [font-family:'Noto_Sans','Noto_Sans_CJK_SC',sans-serif] text-[#222]">
      <div className="w-[393px] bg-white flex items-center pl-[14px] text-[19px] border-b border-[#ccc] shrink-0">在这里输入你要搜索的内容</div>
      <div className="flex items-center justify-center w-[62px] ml-[0px]"><span className="w-[18px] h-[18px] rounded-full border-[3px] border-black" /></div>
      <div className="flex items-center justify-center w-[60px]">
        <svg width="21" height="22" viewBox="0 0 21 22"><path d="M1 1h12M1 21h12M1 6h12v10H1z M18 4v5M18 12v5" fill="none" stroke="#000" strokeWidth="1.500" /></svg>
      </div>
      <div className="flex items-center justify-center w-[63px]">
        <svg width="30" height="30" viewBox="0 0 30 30">
          <circle cx="15" cy="15" r="14.500" fill="#0f7bc4" />
          <path d="M1 15C2 6 9 .5 16 .5 24 .5 29.500 7 29.500 14c0 4-3 6-7 6-3 0-5-1-5.500-3 3 0 4-2 3-4-1-3-4-5-8-4C6 10 2 11 1 15z" fill="#3dcf8e" />
          <path d="M8 19c0 6 5 10 11 10-6 2-14-1-16-8-1-4 1-9 5-11-1 3-1 6 0 9z" fill="#0a4f9c" />
        </svg>
      </div>
      <div className="flex items-center justify-center w-[62px]">
        <svg width="29" height="28" viewBox="0 0 29 28"><path d="M0 3h11l3 3h15v22H0z" fill="#f4c542" /><path d="M0 0h11l3 4H0z" fill="#e2a52a" /><path d="M8 28v-9l6-5 6 5v9h-3v-6h-6v6z" fill="#3a7cc4" /></svg>
      </div>
      <div className="flex items-center justify-center w-[62px]">
        <svg width="30" height="30" viewBox="0 0 30 30"><path d="M15 0l15 11v19H0V11z" fill="#0f5ea8" /><path d="M4 6h22v12l-11 6-11-6z" fill="#e9f4fb" /><path d="M0 11l15 11 15-11v19H0z" fill="#28a8ea" /></svg>
      </div>
      <div className="flex items-center justify-center w-[62px]">
        <div className="w-[30px] h-[35px] bg-[#0a6fc2] flex items-center justify-center">
          <svg width="18" height="20" viewBox="0 0 18 20"><path d="M9 1l8 4.500v9L9 19l-8-4.500v-9z M9 6l4 2.500v3L9 14l-4-2.500v-3z" fill="none" stroke="#cfe6f8" strokeWidth="1.400" /></svg>
        </div>
      </div>
      <div className="flex items-center justify-center w-[61px] relative">
        <svg width="29" height="29" viewBox="0 0 29 29">
          <circle cx="14.500" cy="14.500" r="14.500" fill="#db4437" />
          <path d="M14.500 14.500L1.900 21.700A14.500 14.500 0 0 0 14.500 29a14.500 14.500 0 0 0 12.600-7.300z" fill="#0f9d58" />
          <path d="M14.500 14.500L27.100 21.700A14.500 14.500 0 0 0 27.100 7.200H14.500z" fill="#ffcd40" />
          <circle cx="14.500" cy="14.500" r="7" fill="#fff" /><circle cx="14.500" cy="14.500" r="5.500" fill="#4285f4" />
        </svg>
        <span className="absolute bottom-0 left-[4px] right-[5px] h-[3px] bg-[#1c84cf]" />
      </div>
      <div className="flex items-center justify-center w-[60px] bg-[#eef2f8] ml-[1px] relative">
        <svg width="30" height="30" viewBox="0 0 30 30"><rect x="7" y="1" width="22" height="28" rx="1" fill="#21a366" /><rect x="7" y="1" width="22" height="9" fill="#33c481" /><rect x="7" y="19" width="22" height="10" fill="#185c37" /><rect x="18" y="10" width="11" height="9" fill="#107c41" /><rect x="1" y="7" width="16" height="16" rx="1" fill="#0e6a3a" /><text x="9" y="20" textAnchor="middle" fontSize="13" fontWeight="700" fontFamily="Liberation Sans" fill="#fff">X</text></svg>
        <span className="absolute bottom-0 left-0 right-0 h-[3px] bg-[#1c84cf]" />
      </div>
      <div className="flex-1 flex items-center min-w-0">
        <ChevronUp className="ml-[562px] shrink-0" size={20} strokeWidth={1.300} />
        <svg className="ml-[11px] shrink-0" width="14" height="30" viewBox="0 0 14 30"><rect x="2" y="0" width="10" height="20" rx="5" fill="#111" /><path d="M1 14c0 10 12 10 12 0 M7 23v6M3 29h8" fill="none" stroke="#111" strokeWidth="1.200" /></svg>
        <svg className="ml-[13px] shrink-0" width="20" height="14" viewBox="0 0 20 14"><rect x="4" y="2" width="16" height="10" fill="#111" /><path d="M1 5h3v4H1z M2 1v4" stroke="#111" fill="none" /></svg>
        <svg className="ml-[14px] shrink-0" width="18" height="18" viewBox="0 0 18 18"><path d="M1 17C1 9 7 2 15 1 M5 17c0-5 4-10 10-11 M9 17c0-3 2-6 6-7" fill="none" stroke="#333" strokeWidth="1.200" /><circle cx="14" cy="16" r="2" fill="#111" /></svg>
        <svg className="ml-[10px] shrink-0" width="18" height="16" viewBox="0 0 18 16"><path d="M1 5h3l4-4v14l-4-4H1z M11 5l6 6M17 5l-6 6" fill="none" stroke="#222" strokeWidth="1" /></svg>
        <span className="ml-[12px] text-[19px] shrink-0 text-black">中</span>
        <span className="ml-[16px] w-[20px] h-[20px] border border-black bg-[#e9eef6] flex items-center justify-center text-[16px] leading-none shrink-0">五</span>
        <div className="ml-[22px] shrink-0 text-[15.500px] whitespace-nowrap leading-[24px]">
          <div className="pl-[18px]">16:44</div>
          <div>2022/8/5</div>
        </div>
      </div>
    </div>
  );
}

export default function App() {
  return (
    <div className="w-[1728px] h-[1080px] overflow-hidden relative flex flex-col bg-white">
      <div className="h-[1030px] shrink-0 flex">
        <Browser />
        <Excel />
      </div>
      <Taskbar />
      <Dialog />
      <div className="absolute left-[4px] top-[82px] w-[44px] h-[44px] rounded-full bg-gradient-to-br from-[#3f9cf0] to-[#68bcff] flex items-center justify-center text-[#d9ecff] text-[15px] [font-family:'Liberation_Sans',sans-serif] shadow-[0_1px_6px_rgba(0,0,0,0.25)] z-30">04:45</div>
    </div>
  );
}
